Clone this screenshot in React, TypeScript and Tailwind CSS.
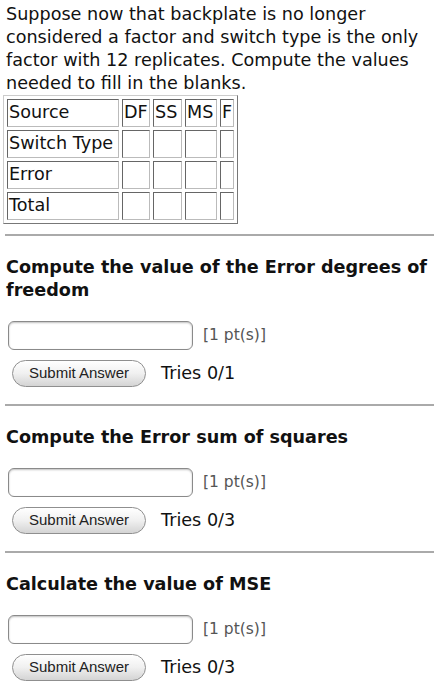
import React from 'react';

const rows = ['Switch Type', 'Error', 'Total'];

const questions = [
  { title: 'Compute the value of the Error degrees of freedom', tries: '0/1' },
  { title: 'Compute the Error sum of squares', tries: '0/3' },
  { title: 'Calculate the value of MSE', tries: '0/3' },
];

function Cell({ children, w }: { children?: React.ReactNode; w: string }) {
  return (
    <td
      className={`${w} h-[28px] p-0 pl-[1px] align-middle whitespace-nowrap border border-t-[#666] border-l-[#666] border-r-[#bbb] border-b-[#bbb] leading-none`}
    >
      {children}
    </td>
  );
}

function Question({ title, tries }: { title: string; tries: string }) {
  return (
    <div>
      <hr className="mx-[5px] border-0 h-[2px] bg-[#aaa]" />
      <h3 className="mt-[20px] px-[6px] text-[17.6px] leading-[23px] font-bold text-[#111]">{title}</h3>
      <div className="mt-[19px] ml-[8px] flex items-center">
        <input
          type="text"
          className="w-[185px] h-[29px] rounded-[6px] border border-[#8a8a8a] bg-white shadow-[inset_0_1px_2px_rgba(0,0,0,0.25)] outline-none"
        />
        <span className="ml-[10px] text-[15.5px] text-[#555]">[1 pt(s)]</span>
      </div>
      <div className="mt-[10px] ml-[12px] mb-[17px] flex items-center">
        <button
          type="button"
          className="w-[134px] h-[27px] rounded-full border border-[#8f8f8f] bg-gradient-to-b from-white via-[#f0f0f0] to-[#d4d4d4] text-[15px] text-[#222] [font-family:'Liberation_Sans',Arial,sans-serif]"
        >
          Submit Answer
        </button>
        <span className="ml-[15px] text-[17.6px] text-[#111]">Tries {tries}</span>
      </div>
    </div>
  );
}

export default function App() {
  return (
    <div className="w-[439px] min-h-[686px] bg-white text-[#111] [font-family:'DejaVu_Sans',Verdana,sans-serif] overflow-hidden">
      <p className="pt-[3px] px-[6px] text-[17.6px] leading-[23px]">
        Suppose now that backplate is no longer considered a factor and switch type is the only factor with 12 replicates.
        Compute the values needed to fill in the blanks.
      </p>
      <table className="ml-[3px] mt-0 border-separate border-spacing-[3px] border border-t-[#ccc] border-l-[#ccc] border-r-[#777] border-b-[#777] text-[17.6px]">
        <tbody>
          <tr>
            <Cell w="w-[112px]">Source</Cell>
            <Cell w="w-[28px]">DF</Cell>
            <Cell w="w-[29px]">SS</Cell>
            <Cell w="w-[32px]">MS</Cell>
            <Cell w="w-[14px]">F</Cell>
          </tr>
          {rows.map((r) => (
            <tr key={r}>
              <Cell w="w-[112px]">{r}</Cell>
              <Cell w="w-[28px]" />
              <Cell w="w-[29px]" />
              <Cell w="w-[32px]" />
              <Cell w="w-[14px]" />
            </tr>
          ))}
        </tbody>
      </table>
      <div className="mt-[10px]">
        {questions.map((q) => (
          <Question key={q.title} title={q.title} tries={q.tries} />
        ))}
      </div>
    </div>
  );
}
